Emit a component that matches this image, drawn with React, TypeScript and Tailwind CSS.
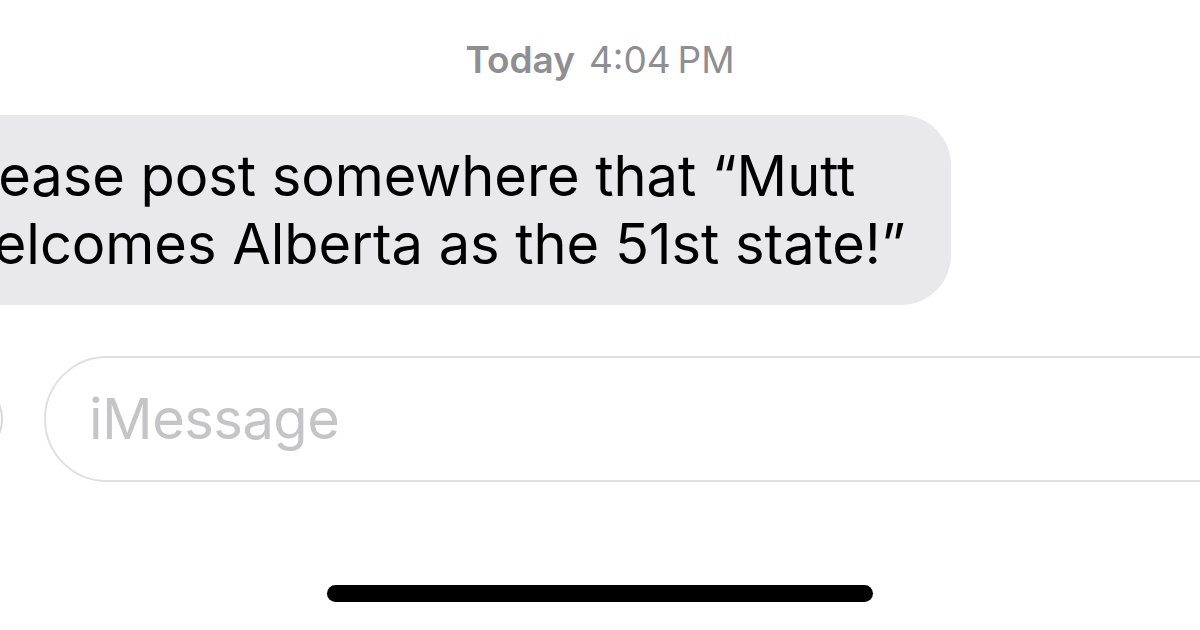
import React from "react";

export default function App() {
  return (
    <div
      className="w-[1200px] h-[630px] bg-white overflow-hidden flex flex-col relative"
      style={{ fontFamily: "Inter, 'Noto Sans', sans-serif" }}
    >
      <div className="pt-[38px] h-[44px] box-content flex justify-center items-center text-[37px] leading-[44px] text-[#8e8e93] tracking-[0px]">
        <span className="font-semibold">Today</span>
        <span className="ml-[14px]">4:04{"\u202F"}PM</span>
      </div>

      <div className="mt-[33px] flex">
        <div className="ml-[-88px] bg-[#e9e9eb] rounded-[50px] pl-[37px] pr-[45px] py-[27px] text-[56px] leading-[68px] text-black tracking-[-0.05px] whitespace-nowrap">
          Please post somewhere that “Mutt
          <br />
          welcomes Alberta as the 51st state!”
        </div>
      </div>

      <div className="mt-[51px] flex items-center">
        <div className="w-[80px] h-[80px] shrink-0 ml-[-77px] rounded-full border-[2.5px] border-[#d8d8d8]" />
        <div className="ml-[41px] h-[126px] w-[1300px] shrink-0 rounded-full border-[2.5px] border-[#e0e0e0] flex items-center pl-[43px]">
          <span className="text-[56px] text-[#c5c5c7] tracking-[-0.5px]">iMessage</span>
        </div>
      </div>

      <div className="mt-auto mb-[28px] flex justify-center">
        <div className="w-[546px] h-[17px] rounded-full bg-black" />
      </div>
    </div>
  );
}
